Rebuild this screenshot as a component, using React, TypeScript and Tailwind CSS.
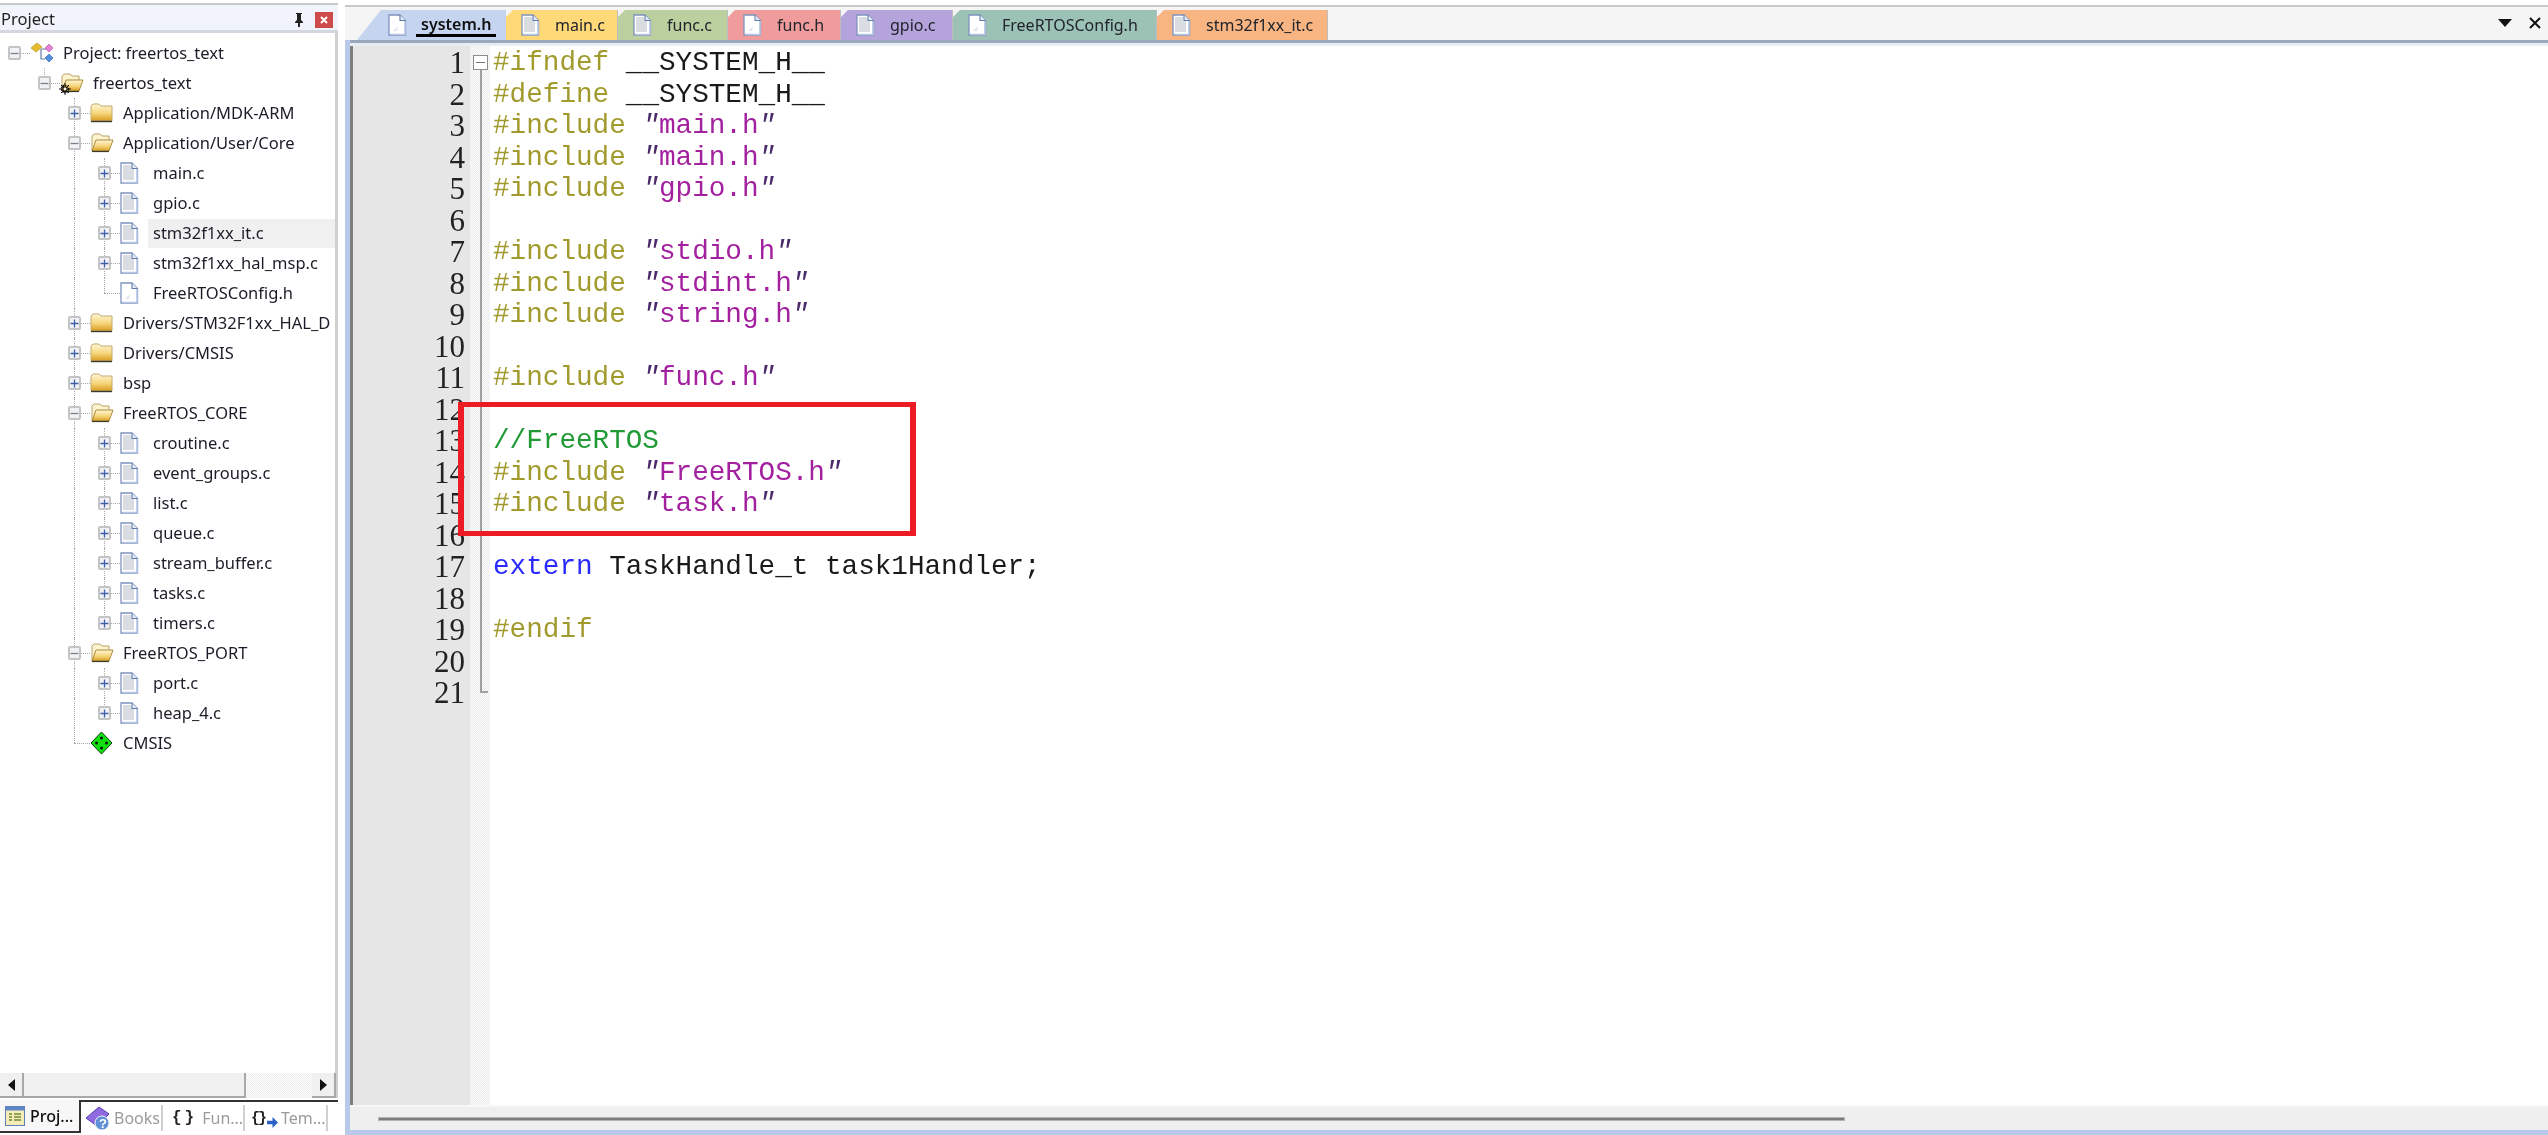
import React from "react";

type Kind = "project" | "target" | "folder" | "open" | "file" | "hfile" | "cmsis";
type Row = {
  label: string;
  level: number;
  kind: Kind;
  exp?: "plus" | "minus";
  last?: boolean;
  active?: boolean;
};

const rows: Row[] = [
  { label: "Project: freertos_text", level: 0, kind: "project", exp: "minus" },
  { label: "freertos_text", level: 1, kind: "target", exp: "minus", last: true },
  { label: "Application/MDK-ARM", level: 2, kind: "folder", exp: "plus" },
  { label: "Application/User/Core", level: 2, kind: "open", exp: "minus" },
  { label: "main.c", level: 3, kind: "file", exp: "plus" },
  { label: "gpio.c", level: 3, kind: "file", exp: "plus" },
  { label: "stm32f1xx_it.c", level: 3, kind: "file", exp: "plus", active: true },
  { label: "stm32f1xx_hal_msp.c", level: 3, kind: "file", exp: "plus" },
  { label: "FreeRTOSConfig.h", level: 3, kind: "hfile", last: true },
  { label: "Drivers/STM32F1xx_HAL_D", level: 2, kind: "folder", exp: "plus" },
  { label: "Drivers/CMSIS", level: 2, kind: "folder", exp: "plus" },
  { label: "bsp", level: 2, kind: "folder", exp: "plus" },
  { label: "FreeRTOS_CORE", level: 2, kind: "open", exp: "minus" },
  { label: "croutine.c", level: 3, kind: "file", exp: "plus" },
  { label: "event_groups.c", level: 3, kind: "file", exp: "plus" },
  { label: "list.c", level: 3, kind: "file", exp: "plus" },
  { label: "queue.c", level: 3, kind: "file", exp: "plus" },
  { label: "stream_buffer.c", level: 3, kind: "file", exp: "plus" },
  { label: "tasks.c", level: 3, kind: "file", exp: "plus" },
  { label: "timers.c", level: 3, kind: "file", exp: "plus", last: true },
  { label: "FreeRTOS_PORT", level: 2, kind: "open", exp: "minus" },
  { label: "port.c", level: 3, kind: "file", exp: "plus" },
  { label: "heap_4.c", level: 3, kind: "file", exp: "plus", last: true },
  { label: "CMSIS", level: 2, kind: "cmsis", last: true },
];

const INDENT = ["w-[8px]", "w-[38px]", "w-[68px]", "w-[98px]"];
const GUIDE_LEFT = ["left-[14px]", "left-[44px]", "left-[74px]", "left-[104px]"];

function FileIcon({ hatched = true }: { hatched?: boolean }) {
  return (
    <svg width="19" height="22" viewBox="0 0 19 22" className="shrink-0">
      <path d="M1 1h11l5.500 5.500V21H1z" fill="#fff" stroke="#7d93bd" strokeWidth="1.300" />
      <path d="M12 1v5.500h5.500" fill="#e6edf8" stroke="#5f79a8" strokeWidth="1.100" />
      <path d="M17 7v13.500H2.500" fill="none" stroke="#b6c6e4" strokeWidth="1.600" />
      {hatched ? (
        <path d="M3 3h8v4h3v11H3z" fill="#c9cdd4" opacity="0.7" />
      ) : (
        <path d="M5 17l5-5-1 5z" fill="#dfe6f4" />
      )}
    </svg>
  );
}

function Folder({ open }: { open?: boolean }) {
  return (
    <svg width="24" height="20" viewBox="0 0 24 20" className="shrink-0">
      <defs>
        <linearGradient id="fold" x1="0" y1="0" x2="0" y2="1">
          <stop offset="0" stopColor="#fff6d6" />
          <stop offset="0.55" stopColor="#f6d67a" />
          <stop offset="1" stopColor="#d89a1e" />
        </linearGradient>
      </defs>
      {open ? (
        <>
          <path d="M2 18V3l2-2h6l2 2h7v4" fill="#fdf3cf" stroke="#b9a46c" strokeWidth="1" />
          <path d="M2 18L6 7h17l-4 11z" fill="url(#fold)" stroke="#a98c3d" strokeWidth="1" />
          <path d="M2 18.500h17" stroke="#3a3a2c" strokeWidth="1.200" />
        </>
      ) : (
        <>
          <path d="M1 18V3l2-2h6l2 2h11v15z" fill="url(#fold)" stroke="#c0aa70" strokeWidth="1" />
          <path d="M1 18.500h21" stroke="#3a3a2c" strokeWidth="1.400" />
        </>
      )}
    </svg>
  );
}

function ProjectIcon() {
  return (
    <svg width="24" height="22" viewBox="0 0 24 22" className="shrink-0">
      <path d="M11 7v10h4M11 7h6" fill="none" stroke="#6b7fa8" strokeWidth="1.200" />
      <path d="M1 6l6-5 5 4-6 5z" fill="#e6bc2c" stroke="#a8881c" strokeWidth="0.600" />
      <path d="M15 6l4-4 4 4-4 4z" fill="#e77fd6" stroke="#a84f98" strokeWidth="0.600" />
      <path d="M15 16l4-4 4 4-4 4z" fill="#4f8ee0" stroke="#2f62a8" strokeWidth="0.600" />
    </svg>
  );
}

function TargetIcon() {
  return (
    <span className="relative flex h-[20px] w-[24px] shrink-0 justify-end">
      <Folder open />
      <svg width="12" height="12" viewBox="0 0 12 12" className="absolute -bottom-[2px] -left-[1px]">
        <circle cx="6" cy="6" r="3.400" fill="none" stroke="#111" strokeWidth="1.800" strokeDasharray="1.500 0.700" />
        <path d="M6 0v12M0 6h12M2 2l8 8M10 2l-8 8" stroke="#111" strokeWidth="1" />
        <circle cx="6" cy="6" r="1.200" fill="#fff" />
      </svg>
    </span>
  );
}

function CmsisIcon() {
  return (
    <svg width="23" height="24" viewBox="0 0 23 24" className="shrink-0">
      <path d="M11.500 1L22 12 11.500 23 1 12z" fill="#10e010" stroke="#0a3a0a" strokeWidth="1" />
      <circle cx="11.500" cy="7" r="1.500" fill="#111" />
      <circle cx="11.500" cy="17" r="1.500" fill="#111" />
      <circle cx="6.500" cy="12" r="1.500" fill="#111" />
      <circle cx="16.500" cy="12" r="1.500" fill="#111" />
    </svg>
  );
}

function Expander({ type }: { type: "plus" | "minus" }) {
  return (
    <span className="relative z-10 flex h-[14px] w-[13px] shrink-0 items-center justify-center rounded-[2px] border-2 border-[#c4c4c4] bg-[#f1f2f5]">
      <svg width="9" height="9" viewBox="0 0 9 9">
        {type === "plus" ? (
          <path d="M0.500 4.500h8M4.500 0.500v8" stroke="#3f5ea8" strokeWidth="1.300" />
        ) : (
          <path d="M0.500 4.500h8" stroke="#7b7f88" strokeWidth="1.300" />
        )}
      </svg>
    </span>
  );
}

function RowIcon({ kind }: { kind: Kind }) {
  if (kind === "project") return <ProjectIcon />;
  if (kind === "target") return <TargetIcon />;
  if (kind === "folder") return <Folder />;
  if (kind === "open") return <Folder open />;
  if (kind === "cmsis") return <CmsisIcon />;
  return <FileIcon hatched={kind === "file"} />;
}

function TreeRow({ row }: { row: Row }) {
  return (
    <div className="relative flex h-[30px] items-center whitespace-nowrap">
      {row.level === 3 && (
        <span className="absolute left-[74px] top-0 h-full border-l border-dotted border-[#a8a8a8]" />
      )}
      {row.level > 0 && (
        <span
          className={`absolute top-0 border-l border-dotted border-[#a8a8a8] ${GUIDE_LEFT[row.level]} ${row.last ? "h-[15px]" : "h-full"}`}
        />
      )}
      <span className={`absolute top-[15px] h-0 w-[16px] border-t border-dotted border-[#a8a8a8] ${GUIDE_LEFT[row.level]}`} />
      <span className={`shrink-0 ${INDENT[row.level]}`} />
      <span className="flex w-[22px] shrink-0 items-center">
        {row.exp ? <Expander type={row.exp} /> : null}
      </span>
      <span className="relative z-10 flex w-[33px] shrink-0 items-center">
        <RowIcon kind={row.kind} />
      </span>
      <span
        className={`flex h-[29px] flex-1 items-center ${row.active ? "-ml-[5px] bg-[#f0f0f0] pl-[5px]" : ""}`}
      >
        <span className="text-[16.500px] leading-none text-[#1c1c28]">{row.label}</span>
      </span>
    </div>
  );
}

const tabs = [
  { name: "main.c", w: "w-[112px]", bg: "bg-[#ffd977]", hatched: true },
  { name: "func.c", w: "w-[110px]", bg: "bg-[#bccf9e]", hatched: true },
  { name: "func.h", w: "w-[113px]", bg: "bg-[#f09c9c]", hatched: false },
  { name: "gpio.c", w: "w-[112px]", bg: "bg-[#b5a3dc]", hatched: true },
  { name: "FreeRTOSConfig.h", w: "w-[204px]", bg: "bg-[#9bc2b4]", hatched: false },
  { name: "stm32f1xx_it.c", w: "w-[171px]", bg: "bg-[#f8b582]", hatched: true },
];

function TabStrip() {
  return (
    <div className="relative flex h-[35px] shrink-0 items-end border-t-2 border-[#c9c9c9] bg-[#f5f5f5] pl-[12px]">
      <div className="flex h-[30px] w-[149px] items-center bg-[#c5d5f0] pl-[31px] [clip-path:polygon(24px_0,100%_0,100%_100%,0_100%)]">
        <FileIcon hatched={false} />
        <span className="ml-[9px] border-b-[3px] border-black px-[5px] pb-[2px] pt-[3px] text-[16px] font-semibold leading-none text-[#111]">
          system.h
        </span>
      </div>
      {tabs.map((t) => (
        <div
          key={t.name}
          className={`flex h-[30px] items-center border-r border-[#bdbdbd] pl-[15px] [clip-path:polygon(7px_0,100%_0,100%_100%,0_100%,0_7px)] ${t.w} ${t.bg}`}
        >
          <FileIcon hatched={t.hatched} />
          <span className="ml-[15px] text-[16px] leading-none text-[#20242c]">{t.name}</span>
        </div>
      ))}
      <svg width="14" height="8" viewBox="0 0 14 8" className="absolute right-[36px] top-[12px]">
        <path d="M0 0h14L7 8z" fill="#111" />
      </svg>
      <svg width="12" height="12" viewBox="0 0 12 12" className="absolute right-[7px] top-[10px]">
        <path d="M1 1l10 10M11 1L1 11" stroke="#111" strokeWidth="2" />
      </svg>
    </div>
  );
}

const P = ({ c }: { c: string }) => <span className="text-[#a19a2c]">{c}</span>;
const S = ({ c }: { c: string }) => (
  <span className="text-[#a3209f]">
    <span className="italic text-[#4a2a6a]">"</span>
    {c}
    <span className="italic text-[#4a2a6a]">"</span>
  </span>
);
const inc = (f: string) => (
  <>
    <P c="#include " />
    <S c={f} />
  </>
);

const code: React.ReactNode[] = [
  <><P c="#ifndef " /><span>__SYSTEM_H__</span></>,
  <><P c="#define " /><span>__SYSTEM_H__</span></>,
  inc("main.h"),
  inc("main.h"),
  inc("gpio.h"),
  null,
  inc("stdio.h"),
  inc("stdint.h"),
  inc("string.h"),
  null,
  inc("func.h"),
  null,
  <span className="text-[#1f9a35]">//FreeRTOS</span>,
  inc("FreeRTOS.h"),
  inc("task.h"),
  null,
  <><span className="text-[#2a2aff]">extern</span> TaskHandle_t task1Handler;</>,
  null,
  <P c="#endif" />,
  null,
  null,
];

function Editor() {
  return (
    <div className="relative flex min-h-0 flex-1 border-l-[3px] border-[#7f7f7f] bg-white">
      <div className="w-[117px] shrink-0 bg-[#e6e6e6] pr-[5px] pt-[1px] text-right font-['Liberation_Serif',serif] text-[31px] leading-[31.500px] text-[#222]">
        {code.map((_, i) => (
          <div key={i} className="h-[31.500px]">{i + 1}</div>
        ))}
      </div>
      <div className="relative w-[20px] shrink-0 bg-[repeating-conic-gradient(#e9e9e9_0_25%,#ffffff_0_50%)] bg-[length:2px_2px]">
        <span className="absolute left-[3px] top-[9px] z-10 flex h-[15px] w-[15px] items-center justify-center border border-[#8c8c8c] bg-white">
          <span className="h-px w-[9px] bg-[#777]" />
        </span>
        <span className="absolute left-[10px] top-[24px] h-[622px] w-[2px] bg-[#a0a0a0]" />
        <span className="absolute left-[10px] top-[645px] h-[2px] w-[8px] bg-[#a0a0a0]" />
      </div>
      <div className="flex-1 pl-[3px] pt-[1px] font-['Liberation_Mono',monospace] text-[27.660px] leading-[31.500px] whitespace-pre text-[#1a1a1a]">
        {code.map((c, i) => (
          <div key={i} className="h-[31.500px]">{c}</div>
        ))}
      </div>
      <div className="absolute left-[105px] top-[356px] h-[134px] w-[458px] border-x-[6px] border-y-[5px] border-[#ed1c24]" />
    </div>
  );
}

function BooksIcon() {
  return (
    <svg width="26" height="26" viewBox="0 0 26 26" className="shrink-0">
      <path d="M1 13L14 2l10 7-12 12z" fill="#8f6ae0" stroke="#5a3cb0" strokeWidth="1" />
      <circle cx="17" cy="18" r="7" fill="#5f8fd8" stroke="#f4f4f4" strokeWidth="1" />
      <text x="14" y="23" fontSize="13" fontWeight="700" fill="#fff" fontFamily="Liberation Sans">?</text>
    </svg>
  );
}

function BottomTabs() {
  return (
    <div className="relative flex h-[33px] shrink-0 text-[16px] leading-none">
      <div className="flex h-[33px] w-[81px] shrink-0 items-center gap-[5px] border-b-2 border-r-2 border-[#333] bg-[#f7f7f7] pl-[5px]">
        <svg width="20" height="20" viewBox="0 0 20 20" className="shrink-0">
          <rect x="0.500" y="0.500" width="19" height="19" fill="#f6ecb8" stroke="#5f7fb8" />
          <rect x="0.500" y="0.500" width="19" height="4" fill="#5f87c8" />
          <path d="M4 8h3M4 11h3M4 14h3M9 8h7M9 11h7M9 14h7" stroke="#6f8a30" strokeWidth="1.500" />
        </svg>
        <span className="font-medium text-[#111]">Proj...</span>
      </div>
      <div className="flex h-full flex-1 items-center border-t-2 border-[#333] pt-[1px]">
        <div className="flex h-[26px] w-[82px] shrink-0 items-center gap-[3px] border-r-2 border-[#d0d0d0] pl-[4px] text-[#9b9b9b]">
          <BooksIcon />
          <span>Books</span>
        </div>
        <div className="flex h-[26px] w-[82px] shrink-0 items-center gap-[5px] border-r-2 border-[#d0d0d0] pl-[9px] text-[#9b9b9b]">
          <span className="font-['Liberation_Mono',monospace] text-[16px] font-bold tracking-[3px] text-[#222]">{"{}"}</span>
          <span>Fun...</span>
        </div>
        <div className="flex h-[26px] w-[83px] shrink-0 items-center border-r-2 border-[#d0d0d0] pl-[6px] text-[#9b9b9b]">
          <span className="font-['Liberation_Mono',monospace] text-[15px] font-bold tracking-[-2px] text-[#222]">{"{}"}</span>
          <svg width="11" height="11" viewBox="0 0 12 12" className="ml-[2px] mt-[8px] shrink-0">
            <path d="M0 4h6V0l6 6-6 6V8H0z" fill="#2f62c8" />
          </svg>
          <span className="ml-[3px]">Tem...</span>
        </div>
      </div>
    </div>
  );
}

function TreeScrollbar() {
  return (
    <div className="mb-[2px] flex h-[25px] shrink-0 items-stretch border-r-2 border-[#cfcfcf] bg-[repeating-conic-gradient(#ececec_0_25%,#ffffff_0_50%)] bg-[length:2px_2px]">
      <div className="flex w-[24px] items-center justify-center border-b-2 border-r-2 border-[#a8a8a8] bg-[#f0f0f0]">
        <svg width="7" height="12" viewBox="0 0 7 12"><path d="M7 0v12L0 6z" fill="#111" /></svg>
      </div>
      <div className="w-[222px] border-b-2 border-r-2 border-[#a8a8a8] bg-[#f0f0f0]" />
      <div className="flex-1" />
      <div className="flex w-[24px] items-center justify-center border-b-2 border-r-2 border-[#a8a8a8] bg-[#f0f0f0]">
        <svg width="7" height="12" viewBox="0 0 7 12"><path d="M0 0v12l7-6z" fill="#111" /></svg>
      </div>
    </div>
  );
}

export default function App() {
  return (
    <div className="flex h-[1135px] w-[2548px] overflow-hidden bg-white font-['Noto_Sans',sans-serif] blur-[0.4px]">
      <aside className="flex w-[338px] shrink-0 flex-col pb-[2px]">
        <div className="h-[5px] shrink-0 border-b-2 border-[#c9c9c9]" />
        <div className="flex h-[28px] shrink-0 items-center justify-between border-b-[3px] border-[#d3d8e0] bg-[#f1f5fb] pl-[1px] pr-[5px] pt-[4px]">
          <span className="text-[16.500px] leading-none text-[#222]">Project</span>
          <span className="flex items-center gap-[10px]">
            <svg width="12" height="16" viewBox="0 0 12 16">
              <path d="M3 1h6v1H8v6l2 2v1H7v4H5v-4H2v-1l2-2V2H3z" fill="#222" />
            </svg>
            <span className="flex h-[16px] w-[18px] items-center justify-center bg-[#cd4b4b]">
              <svg width="8" height="8" viewBox="0 0 8 8"><path d="M1 1l6 6M7 1L1 7" stroke="#fff" strokeWidth="2" /></svg>
            </span>
          </span>
        </div>
        <div className="min-h-0 flex-1 overflow-hidden border-r-[3px] border-[#d0d0d0] bg-white pt-[5px]">
          {rows.map((r) => (
            <TreeRow key={r.label} row={r} />
          ))}
        </div>
        <TreeScrollbar />
        <BottomTabs />
      </aside>
      <main className="ml-[7px] flex min-w-0 flex-1 flex-col">
        <div className="h-[5px] shrink-0" />
        <TabStrip />
        <div className="flex min-h-0 flex-1 flex-col border-b-[5px] border-l-[5px] border-[#b9c9ea]">
          <div className="h-[6px] shrink-0 border-t-[3px] border-[#9aa7bd] bg-[#e9ecf2]" />
          <Editor />
          <div className="flex h-[25px] shrink-0 items-center border-t-2 border-[#f7f7f7] bg-[#efefef] pl-[28px]">
            <div className="h-[4px] w-[1467px] border border-[#b5b5b5] bg-[#7c7c7c]" />
          </div>
        </div>
      </main>
    </div>
  );
}
